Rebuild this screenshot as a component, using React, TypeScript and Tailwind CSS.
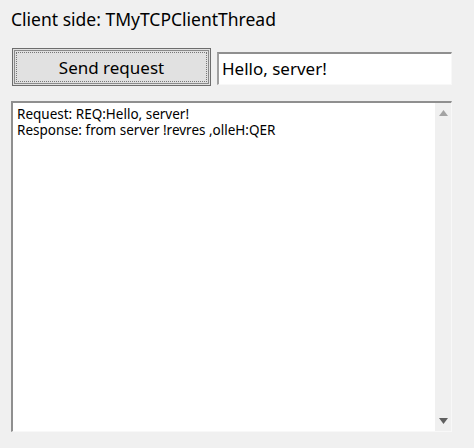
export default function App() {
  return (
    <div
      className="w-[474px] h-[448px] bg-[#f0f0f0] text-black flex flex-col pl-[11px] pr-[22px] pt-[7px]"
      style={{ fontFamily: '"Segoe UI", "Noto Sans", sans-serif' }}
    >
      <div className="text-[17.5px] leading-[24px] h-[24px]">Client side: TMyTCPClientThread</div>

      <div className="flex items-start mt-[17px] gap-[6px]">
        {/* default push button */}
        <button className="ml-px w-[199px] h-[38px] border border-[#6d6d6d] bg-[#e1e1e1] p-px">
          <span className="flex h-full w-full items-center justify-center border border-[#8a8a8a] outline-1 outline-dotted outline-offset-[-3px] outline-[#777] text-[17px] leading-none">
            Send request
          </span>
        </button>

        {/* edit */}
        <div className="mt-[4px] flex-1 h-[33px] bg-white border-t-2 border-l-2 border-t-[#8f8f8f] border-l-[#a0a0a0] border-b border-r border-b-[#f8f8f8] border-r-[#f8f8f8] flex items-center pl-[3px] text-[17px]">
          Hello, server!
        </div>
      </div>

      {/* memo */}
      <div className="mt-[15px] h-[331px] flex bg-white border-t-2 border-l-2 border-t-[#8f8f8f] border-l-[#8f8f8f] border-b border-r border-b-[#f8f8f8] border-r-[#f8f8f8]">
        <div className="flex-1 pl-[4px] pt-[3px] text-[13.5px] leading-[16px]">
          <div>Request: REQ:Hello, server!</div>
          <div>Response: from server !revres ,olleH:QER</div>
        </div>
        <div className="w-[16px] bg-[#f0f0f0] flex flex-col items-center justify-between py-[7px]">
          <svg width="9" height="6" viewBox="0 0 9 6">
            <path d="M4.5 0L9 6H0z" fill="#a3a3a3" />
          </svg>
          <svg width="9" height="6" viewBox="0 0 9 6">
            <path d="M0 0h9L4.5 6z" fill="#606060" />
          </svg>
        </div>
      </div>
    </div>
  );
}
